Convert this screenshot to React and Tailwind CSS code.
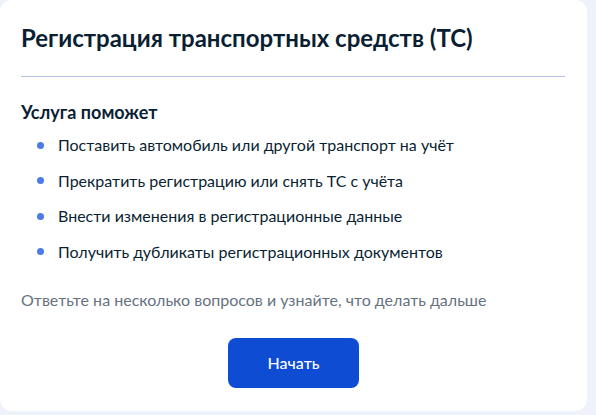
const ITEMS = [
  'Поставить автомобиль или другой транспорт на учёт',
  'Прекратить регистрацию или снять ТС с учёта',
  'Внести изменения в регистрационные данные',
  'Получить дубликаты регистрационных документов',
]

export default function App() {
  return (
    <div className="h-[415px] w-[596px] overflow-hidden bg-[#eef2fb] font-['Lato',sans-serif]">
      <div className="h-[411px] w-[587px] rounded-[12px] bg-white px-[21px] pt-[24px] text-[#0b1f33]">
        <h1 className="text-[24px] font-bold leading-[28px]">
          Регистрация транспортных средств (ТС)
        </h1>
        <div className="mt-[24px] h-px w-[544px] bg-[#b4c3e3]" />

        <h2 className="mt-[23px] text-[18px] font-bold leading-[24px]">Услуга поможет</h2>
        <ul className="mt-[11px] flex flex-col gap-[15.5px] pl-[16px]">
          {ITEMS.map((item) => (
            <li key={item} className="flex items-center gap-[14px] text-[16px] leading-[20px]">
              <span className="h-[7px] w-[7px] shrink-0 rounded-full bg-[#4d7ae8]" />
              {item}
            </li>
          ))}
        </ul>

        <p className="mt-[28px] text-[16px] leading-[20px] text-[#66727f]">
          Ответьте на несколько вопросов и узнайте, что делать дальше
        </p>

        <div className="mt-[28px] flex justify-center">
          <button className="h-[50px] w-[131px] rounded-[8px] bg-[#0d4cd3] text-[16px] font-medium text-white">
            Начать
          </button>
        </div>
      </div>
    </div>
  )
}
